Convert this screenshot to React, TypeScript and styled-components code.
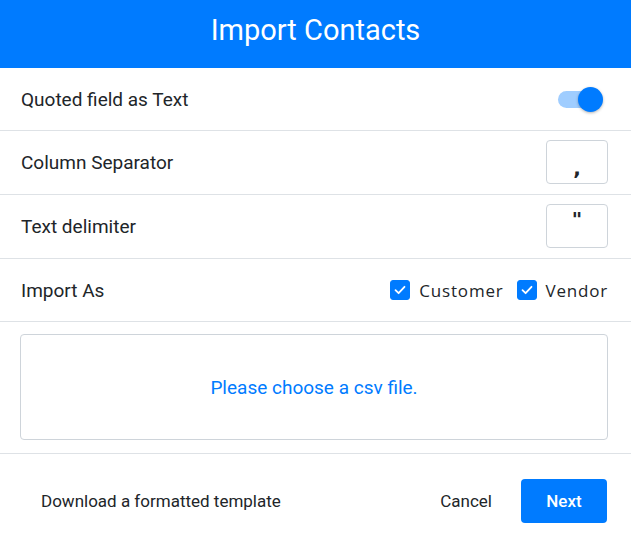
import * as React from "react";
import { useState } from "react";
import styled, { createGlobalStyle } from "styled-components";

const GlobalStyle = createGlobalStyle`
  html, body {
    margin: 0;
    padding: 0;
    background: #fff;
  }
  body {
    font-family: Roboto, "Noto Sans", Arial, sans-serif;
    color: #212529;
  }
  * { box-sizing: border-box; }
`;

const App = () => {
  const [quoted, setQuoted] = useState(true);
  const [customer, setCustomer] = useState(true);
  const [vendor, setVendor] = useState(true);

  return (
    <Modal>
      <GlobalStyle />
      <Header>Import Contacts</Header>
      <Row $h={63}>
        <Label>Quoted field as Text</Label>
        <Toggle $on={quoted} onClick={() => setQuoted(!quoted)}>
          <Knob $on={quoted} />
        </Toggle>
      </Row>
      <Row>
        <Label>Column Separator</Label>
        <CharBox $align="flex-end">,</CharBox>
      </Row>
      <Row>
        <Label>Text delimiter</Label>
        <CharBox $align="flex-start">"</CharBox>
      </Row>
      <Row $h={63}>
        <Label>Import As</Label>
        <Checks>
          <Check onClick={() => setCustomer(!customer)}>
            <Box $checked={customer}>
              <CheckMark />
            </Box>
            <span>Customer</span>
          </Check>
          <Check onClick={() => setVendor(!vendor)}>
            <Box $checked={vendor}>
              <CheckMark />
            </Box>
            <span>Vendor</span>
          </Check>
        </Checks>
      </Row>
      <DropSection>
        <DropZone>Please choose a csv file.</DropZone>
      </DropSection>
      <Footer>
        <TemplateLink>Download a formatted template</TemplateLink>
        <Actions>
          <CancelBtn>Cancel</CancelBtn>
          <NextBtn>Next</NextBtn>
        </Actions>
      </Footer>
    </Modal>
  );
};
export default App;

const CheckMark = () => (
  <svg width="14" height="14" viewBox="0 0 14 14" fill="none">
    <path
      d="M2.5 7.2 L5.6 10.2 L11.5 3.8"
      stroke="#fff"
      strokeWidth="1.8"
      strokeLinecap="round"
      strokeLinejoin="round"
    />
  </svg>
);

const Modal = styled.div`
  width: 631px;
  height: 536px;
  display: flex;
  flex-direction: column;
  background: #fff;
  overflow: hidden;
`;

const Header = styled.div`
  height: 68px;
  flex-shrink: 0;
  background: #007bff;
  color: #fff;
  display: flex;
  align-items: center;
  justify-content: center;
  font-size: 29px;
  font-weight: 400;
  padding-bottom: 8px;
`;

const Row = styled.div<{ $h?: number }>`
  height: ${(p) => p.$h ?? 64}px;
  flex-shrink: 0;
  display: flex;
  align-items: center;
  justify-content: space-between;
  padding: 0 24px 0 21px;
  border-bottom: 1px solid #dee2e6;
`;

const Label = styled.div`
  font-size: 19px;
  color: #212529;
`;

const Toggle = styled.div<{ $on: boolean }>`
  position: relative;
  width: 38px;
  height: 17px;
  border-radius: 9px;
  background: ${(p) => (p.$on ? "#9fcdff" : "#ced4da")};
  margin-right: 11px;
  cursor: pointer;
`;

const Knob = styled.div<{ $on: boolean }>`
  position: absolute;
  top: 50%;
  left: ${(p) => (p.$on ? "20px" : "-4px")};
  width: 25px;
  height: 25px;
  margin-top: -12.5px;
  border-radius: 50%;
  background: ${(p) => (p.$on ? "#007bff" : "#f8f9fa")};
  box-shadow: 0 1px 3px rgba(0, 0, 0, 0.3);
`;

const CharBox = styled.div<{ $align: string }>`
  width: 62px;
  height: 44px;
  margin: -2px -1px 0 0;
  border: 1px solid #ced4da;
  border-radius: 4px;
  display: flex;
  justify-content: center;
  align-items: ${(p) => p.$align};
  padding: 4px 0 5px;
  font-family: "DejaVu Sans", sans-serif;
  font-weight: 700;
  font-size: 20px;
  line-height: 20px;
  color: #212529;
`;

const Checks = styled.div`
  display: flex;
  align-items: center;
  gap: 13px;
  margin-right: -1px;
`;

const Check = styled.label`
  display: flex;
  align-items: center;
  gap: 9px;
  cursor: pointer;
  font-family: "Open Sans", sans-serif;
  font-size: 17px;
  letter-spacing: 0.8px;
  color: #212529;
`;

const Box = styled.div<{ $checked: boolean }>`
  width: 20px;
  height: 20px;
  border-radius: 3px;
  background: ${(p) => (p.$checked ? "#007bff" : "#fff")};
  border: 1px solid ${(p) => (p.$checked ? "#007bff" : "#adb5bd")};
  display: flex;
  align-items: center;
  justify-content: center;
`;

const DropSection = styled.div`
  padding: 12px 23px 13px 20px;
  border-bottom: 1px solid #dee2e6;
`;

const DropZone = styled.div`
  height: 106px;
  border: 1px solid #ced4da;
  border-radius: 4px;
  display: flex;
  align-items: center;
  justify-content: center;
  color: #007bff;
  font-size: 19px;
  cursor: pointer;
`;

const Footer = styled.div`
  flex: 1;
  display: flex;
  align-items: center;
  justify-content: space-between;
  padding: 12px 24px 0 41px;
`;

const TemplateLink = styled.a`
  font-size: 17px;
  color: #212529;
  cursor: pointer;
`;

const Actions = styled.div`
  display: flex;
  align-items: center;
  gap: 29px;
`;

const Btn = styled.button`
  appearance: none;
  border: 0;
  cursor: pointer;
  font-family: inherit;
  font-size: 17px;
  border-radius: 4px;
`;

const CancelBtn = styled(Btn)`
  background: transparent;
  color: #212529;
  padding: 0;
`;

const NextBtn = styled(Btn)`
  width: 86px;
  height: 44px;
  background: #007bff;
  color: #fff;
  font-weight: 500;
`;
